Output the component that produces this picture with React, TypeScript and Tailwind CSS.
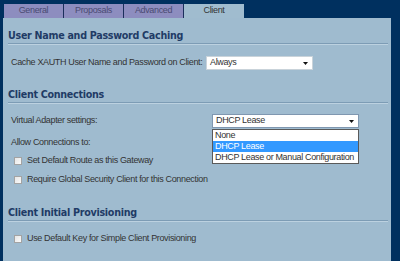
import React from "react";

const tabs = ["General", "Proposals", "Advanced"];

function Heading({ text, className }: { text: string; className: string }) {
  return (
    <div
      className={`ml-[5px] mr-[3px] h-[15px] whitespace-nowrap border-b border-[#7d9cb5] shadow-[0_1px_0_#bcd1e0] font-['DejaVu_Sans',Verdana,sans-serif] text-[9.6px] font-bold leading-[14px] tracking-[-0.3px] text-[#1f3b66] ${className}`}
    >
      {text}
    </div>
  );
}

function Arrow() {
  return (
    <svg width="5" height="3" viewBox="0 0 5 3" className="shrink-0">
      <path d="M0 0h5L2.5 3z" fill="#111" />
    </svg>
  );
}

function Checkbox({ label, className }: { label: string; className: string }) {
  return (
    <div className={`flex h-[14px] items-center gap-[5px] whitespace-nowrap pl-[11px] ${className}`}>
      <div className="h-[8px] w-[8px] border border-[#a3a3a3] bg-gradient-to-br from-[#e6e6e6] to-[#fafafa]" />
      <span>{label}</span>
    </div>
  );
}

export default function App() {
  return (
    <div className="flex h-[261px] w-[400px] flex-col overflow-hidden bg-[#00305f] font-['Liberation_Sans',Arial,sans-serif] text-[9px] tracking-[-0.35px] text-[#333]">
      <div className="flex h-[18px] shrink-0 pl-[4px] pt-[4px]">
        {tabs.map((t) => (
          <div
            key={t}
            className="h-[14px] w-[60px] border-r border-[#1c2f5c] bg-[#8d8dbf] text-center leading-[13px] text-[#4b4b72]"
          >
            {t}
          </div>
        ))}
        <div className="h-[14px] w-[60px] bg-[#a0bccf] text-center leading-[13px] text-[#333]">Client</div>
      </div>

      <div className="relative ml-[3px] w-[388px] flex-1 bg-[#9fbbcf]">
        <Heading text="User Name and Password Caching" className="mt-[11px]" />

        <div className="mt-[12px] flex h-[14px] items-center whitespace-nowrap pl-[8px]">
          <span className="w-[195px]">Cache XAUTH User Name and Password on Client:</span>
          <div className="flex h-[14px] w-[107px] items-center justify-between border border-[#c9d3da] bg-white pl-[3px] pr-[4px]">
            <span>Always</span>
            <Arrow />
          </div>
        </div>

        <Heading text="Client Connections" className="mt-[18px]" />

        <div className="mt-[11px] flex h-[14px] items-center whitespace-nowrap pl-[8px]">
          <span className="w-[201px]">Virtual Adapter settings:</span>
          <div className="relative w-[147px]">
            <div className="flex h-[14px] items-center justify-between border border-[#7f97b0] bg-white pl-[3px] pr-[4px]">
              <span>DHCP Lease</span>
              <Arrow />
            </div>
            <div className="absolute left-0 top-[15px] z-10 w-[147px] border border-[#5a5a5a] bg-white">
              <div className="h-[11px] pl-[2px] leading-[11px]">None</div>
              <div className="h-[11px] bg-[#3399ff] pl-[2px] leading-[11px] text-white">DHCP Lease</div>
              <div className="h-[11px] pl-[2px] leading-[11px]">DHCP Lease or Manual Configuration</div>
            </div>
          </div>
        </div>

        <div className="mt-[8px] flex h-[14px] items-center pl-[8px]">Allow Connections to:</div>

        <Checkbox label="Set Default Route as this Gateway" className="mt-[4px]" />
        <Checkbox label="Require Global Security Client for this Connection" className="mt-[5px]" />

        <Heading text="Client Initial Provisioning" className="mt-[19px]" />

        <Checkbox label="Use Default Key for Simple Client Provisioning" className="mt-[11px]" />
      </div>
    </div>
  );
}
